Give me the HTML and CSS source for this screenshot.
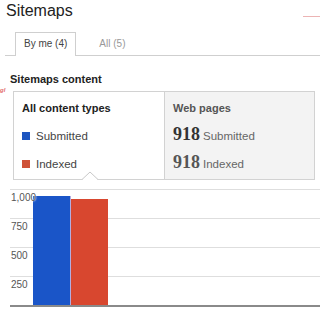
FILE: index.html
```html
<!DOCTYPE html>
<html>
<head>
<meta charset="utf-8">
<link rel="stylesheet" href="styles.css">
</head>
<body>
<div class="page">
  <div class="header">
    <h1 class="title">Sitemaps</h1>
    <span class="mark"></span>
  </div>
  <div class="tabs">
    <div class="tab active">By me (4)</div>
    <div class="tab">All (5)</div>
  </div>
  <div class="section-title">Sitemaps content</div>
  <div class="content-row">
    <div class="gutter">gl</div>
    <div class="box">
      <div class="left">
        <div class="row head">All content types</div>
        <div class="row legend"><span class="swatch blue"></span>Submitted</div>
        <div class="row legend"><span class="swatch red"></span>Indexed</div>
        <svg class="notch" width="16" height="9" viewBox="0 0 16 9">
          <polygon points="0,9 8,1 16,9" fill="#fff"/>
          <polyline points="0,8.5 8,1 16,8.5" fill="none" stroke="#c8c8c8" stroke-width="1"/>
        </svg>
      </div>
      <div class="right">
        <div class="row head dim">Web pages</div>
        <div class="row stat"><span class="num">918</span>Submitted</div>
        <div class="row stat"><span class="num num2">918</span>Indexed</div>
      </div>
    </div>
  </div>
  <div class="chart">
    <div class="lines">
      <div class="gline"></div>
      <div class="gline"></div>
      <div class="gline"></div>
      <div class="gline"></div>
      <div class="axis"></div>
    </div>
    <div class="bars">
      <div class="bar bar-blue" style="height:109px"></div>
      <div class="bar bar-red" style="height:106px"></div>
    </div>
    <div class="labels">
      <div class="lab">1,000</div>
      <div class="lab">750</div>
      <div class="lab">500</div>
      <div class="lab">250</div>
    </div>
  </div>
</div>
</body>
</html>
```
FILE: styles.css
```css
html, body {
  margin: 0;
  padding: 0;
  background: #fff;
}
body {
  font-family: "Liberation Sans", Arial, sans-serif;
}
.page {
  width: 320px;
  height: 310px;
  overflow: hidden;
}
.header {
  display: flex;
  justify-content: space-between;
  align-items: flex-start;
  padding: 2px 0 0 6px;
  height: 18px;
}
.title {
  margin: 0;
  font-size: 16px;
  line-height: 18px;
  font-weight: 400;
  color: #222;
}
.mark {
  width: 17px;
  height: 14px;
  border-bottom: 1px solid #ecb4b4;
}
.tabs {
  display: flex;
  gap: 14px;
  margin: 12px 0 0 5px;
  padding-left: 10px;
  border-bottom: 1px solid #cfcfcf;
}
.tab {
  font-size: 10px;
  line-height: 22px;
  padding: 0 8px 1px;
  margin-bottom: -1px;
  border: 1px solid transparent;
  border-bottom: none;
  color: #999;
}
.tab.active {
  border-color: #cfcfcf;
  background: #fff;
  color: #444;
}
.section-title {
  margin: 16px 0 0 10px;
  font-size: 11px;
  line-height: 14px;
  font-weight: 700;
  color: #222;
}
.content-row {
  display: flex;
  margin-top: 5px;
}
.gutter {
  width: 13px;
  margin-top: -4px;
  font-size: 6px;
  line-height: 7px;
  font-weight: 700;
  font-style: italic;
  color: #e26a6a;
}
.box {
  box-sizing: border-box;
  width: 302px;
  height: 89px;
  display: flex;
  border: 1px solid #d2d2d2;
}
.left {
  position: relative;
  box-sizing: border-box;
  width: 150px;
  padding: 2px 0 0 8px;
}
.right {
  flex: 1;
  border-left: 1px solid #d2d2d2;
  background: #f3f3f3;
  padding: 2px 0 0 8px;
}
.row {
  height: 28px;
  line-height: 28px;
  white-space: nowrap;
}
.head {
  font-size: 11px;
  font-weight: 700;
  color: #222;
}
.head.dim {
  color: #555;
}
.legend {
  display: flex;
  align-items: center;
  font-size: 11.5px;
  color: #444;
}
.swatch {
  width: 8px;
  height: 8px;
  margin-right: 6px;
}
.swatch.blue {
  background: #1d55c0;
}
.swatch.red {
  background: #cf5238;
}
.stat {
  font-size: 11.5px;
  color: #666;
}
.num {
  font-family: "Liberation Serif", "Times New Roman", serif;
  font-size: 18px;
  font-weight: 700;
  line-height: 1;
  color: #333;
  margin-right: 3px;
}
.num2 {
  color: #555;
}
.notch {
  position: absolute;
  left: 68px;
  bottom: -1px;
  display: block;
}
.chart {
  display: grid;
  margin-left: 10px;
  width: 310px;
}
.lines, .bars, .labels {
  grid-area: 1 / 1;
}
.lines {
  padding-top: 9px;
  display: flex;
  flex-direction: column;
}
.gline {
  height: 28px;
  border-top: 1px solid #dedede;
}
.axis {
  border-top: 2px solid #8a8a8a;
}
.bars {
  display: flex;
  align-items: flex-end;
  padding: 0 0 2px 23px;
}
.bar {
  width: 37px;
}
.bar-blue {
  background: #1a55c8;
  border-right: 1px solid #b3addf;
}
.bar-red {
  background: #d8472f;
}
.labels {
  padding-top: 9px;
  display: flex;
  flex-direction: column;
  align-items: flex-start;
}
.lab {
  height: 26px;
  padding-top: 3px;
  padding-left: 1px;
  font-size: 10px;
  line-height: 12px;
  color: #555;
  text-shadow: 0 0 2px #fff, 0 0 1px #fff;
}
```
